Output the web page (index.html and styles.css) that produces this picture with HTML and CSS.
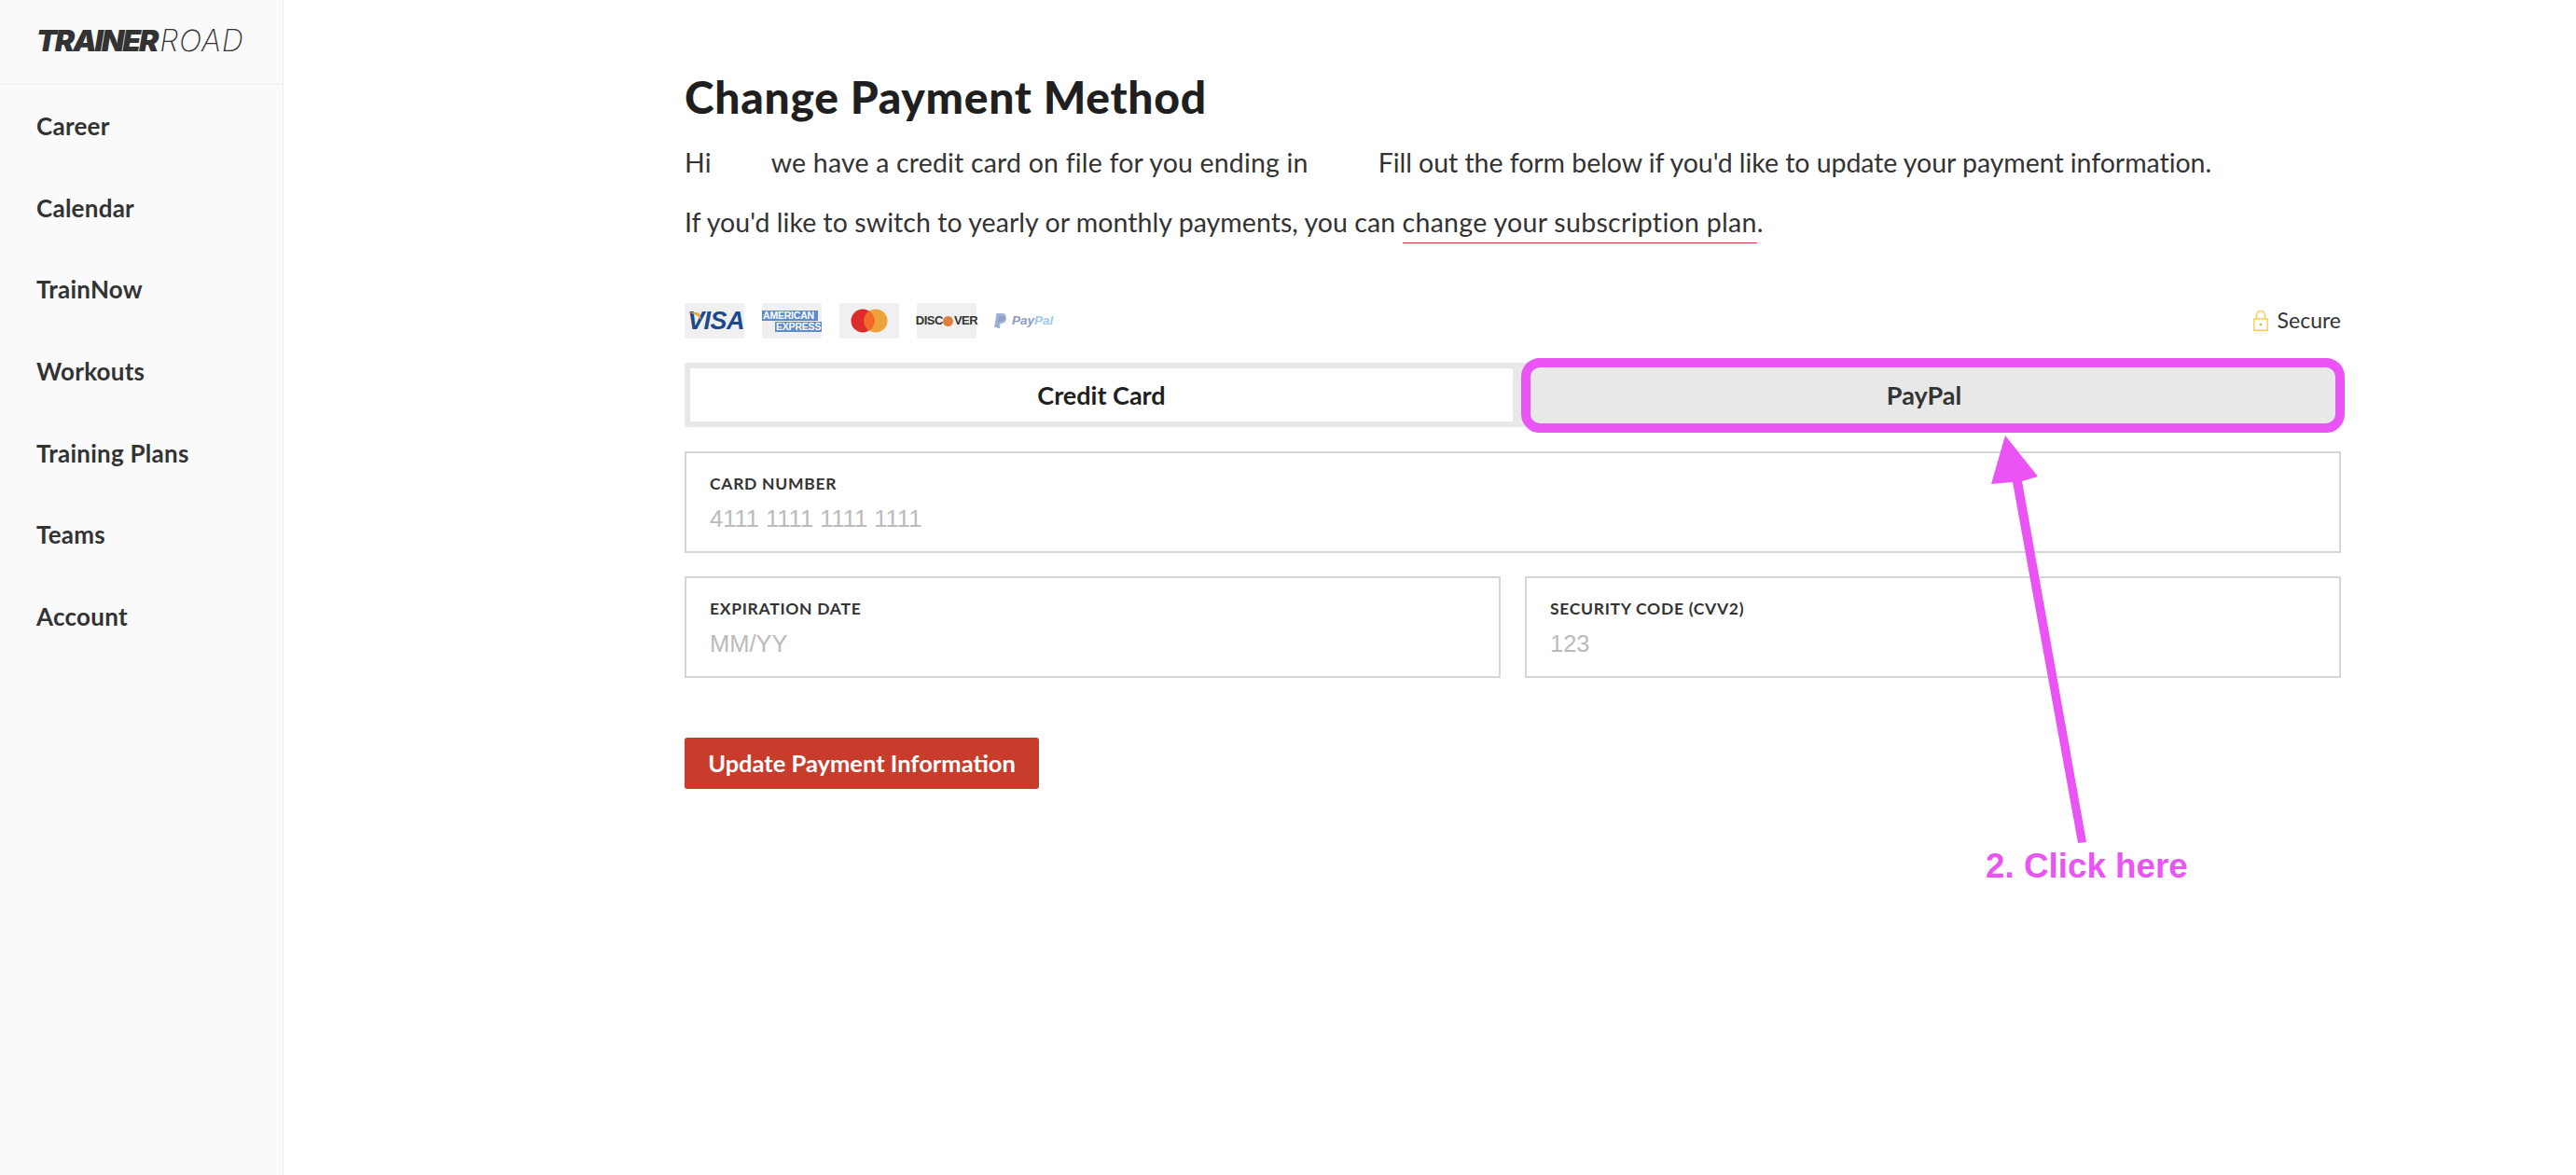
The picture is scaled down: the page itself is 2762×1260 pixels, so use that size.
FILE: index.html
```html
<!DOCTYPE html>
<html lang="en">
<head>
<meta charset="utf-8">
<title>Change Payment Method</title>
<link rel="stylesheet" href="styles.css">
</head>
<body>
<aside class="sidebar">
  <div class="brand"><span class="brand-a">TRAINER</span><span class="brand-b">ROAD</span></div>
  <nav class="nav">
    <a>Career</a><a>Calendar</a><a>TrainNow</a><a>Workouts</a><a>Training Plans</a><a>Teams</a><a>Account</a>
  </nav>
</aside>
<main class="main">
  <h1 class="title">Change Payment Method</h1>
  <p class="para first"><span>Hi</span><span class="gap-name"></span><span>we have a credit card on file for you ending in</span><span class="gap-digits"></span><span class="tight">Fill out the form below if you'd like to update your payment information.</span></p>
  <p class="para second">If you'd like to switch to yearly or monthly payments, you can <a class="link">change your subscription plan</a>.</p>

  <div class="pay-head">
    <div class="cards">
      <div class="card visa"><svg class="visa-tick" viewBox="0 0 14 8"><path d="M0 0h9q3 0 4 4l1 4Q10 2 0 0z" fill="#eda33b"/></svg><span>VISA</span></div>
      <div class="card amex"><span class="amex-1">AMERICAN</span><span class="amex-2">EXPRESS</span></div>
      <div class="card mc"><svg viewBox="0 0 40 26" width="40" height="26"><circle cx="13" cy="13" r="12.5" fill="#dd2c2c"/><circle cx="27" cy="13" r="12.5" fill="#eda33b"/><path d="M20 2.4a12.5 12.5 0 0 1 0 21.2a12.5 12.5 0 0 1 0-21.2z" fill="#f0692b"/></svg></div>
      <div class="card discover"><span>DISC</span><i class="disc-dot"></i><span>VER</span></div>
      <div class="paypal">
        <svg viewBox="0 0 14 16" width="14" height="16"><path d="M2.5 0h6q4.500 0 4 4t-5.500 5H5l-1 6H0z" fill="#9db4d8"/><path d="M5 3h5q3.500 0 3 3.500T8 11H6.500L6 16H3z" fill="#8b9bc7" opacity=".75"/></svg>
        <span class="pp-1">Pay</span><span class="pp-2">Pal</span>
      </div>
    </div>
    <div class="secure">
      <svg viewBox="0 0 16 22" width="16" height="22"><path d="M3.500 9V5a4.500 4.500 0 0 1 9 0v4" fill="none" stroke="#f7cf53" stroke-width="1.500"/><rect x=".8" y="9" width="14.400" height="12.200" fill="none" stroke="#f7cf53" stroke-width="1.500"/><circle cx="8" cy="15" r="1.300" fill="#d9b13c"/></svg>
      <span>Secure</span>
    </div>
  </div>

  <div class="tabs">
    <div class="tab active">Credit Card</div>
    <div class="tab">PayPal</div>
  </div>

  <div class="field wide">
    <div class="label">CARD NUMBER</div>
    <div class="placeholder">4111 1111 1111 1111</div>
  </div>
  <div class="field-row">
    <div class="field">
      <div class="label">EXPIRATION DATE</div>
      <div class="placeholder">MM/YY</div>
    </div>
    <div class="field">
      <div class="label">SECURITY CODE (CVV2)</div>
      <div class="placeholder">123</div>
    </div>
  </div>
  <button class="submit">Update Payment Information</button>
</main>

<svg class="annotation" viewBox="0 0 2762 1260" width="2762" height="1260">
  <rect x="1636" y="389" width="873" height="70" rx="15" fill="none" stroke="#ea54f5" stroke-width="10"/>
  <path d="M2150 467L2185 511L2168 516L2237 903L2228 904L2158 517L2135 519z" fill="#ea54f5"/>
</svg>
<div class="callout">2. Click here</div>
</body>
</html>
```
FILE: styles.css
```css
* { box-sizing: border-box; }
html, body { margin: 0; height: 100%; }
body {
  display: flex;
  min-height: 1260px;
  background: #fff;
  color: #333;
  font-family: Lato, "Liberation Sans", sans-serif;
  overflow: hidden;
}
.sidebar {
  width: 304px;
  flex: none;
  background: #fafafa;
  border-right: 1px solid #eee;
}
.brand {
  height: 91px;
  padding: 24px 0 0 39px;
  border-bottom: 1px solid #eee;
  font-family: Inter, Lato, sans-serif;
  font-size: 32px;
  line-height: 40px;
  font-style: italic;
  color: #333;
  white-space: nowrap;
}
.brand-a { font-weight: 900; letter-spacing: -2.100px; }
.brand-b { font-weight: 200; letter-spacing: .7px; margin-left: 3px; }
.nav { display: flex; flex-direction: column; padding-top: 1px; }
.nav a {
  height: 87.7px;
  padding: 28px 0 0 39px;
  font-size: 26px;
  line-height: 30px;
  font-weight: 700;
  letter-spacing: .25px;
  color: #333;
}
.main {
  flex: 1;
  padding: 72px 252px 0 430px;
}
.title {
  margin: 0;
  font-size: 48px;
  line-height: 64px;
  font-weight: 900;
  letter-spacing: .7px;
  color: #1f1f1f;
}
.para {
  margin: 0;
  font-size: 28.500px;
  line-height: 36px;
  letter-spacing: .18px;
  color: #333;
  white-space: nowrap;
}
.tight { letter-spacing: -.05px; }
.first { margin-top: 20px; }
.second { margin-top: 28px; letter-spacing: .05px; }
.gap-name { display: inline-block; width: 64px; }
.gap-digits { display: inline-block; width: 75px; }
.link {
  padding-bottom: 5px;
  letter-spacing: .3px;
  border-bottom: 1px solid #c93b2c;
}
.pay-head {
  display: flex;
  justify-content: space-between;
  align-items: center;
  height: 38px;
  margin-top: 69px;
}
.cards { display: flex; align-items: center; gap: 19px; }
.card {
  width: 64px;
  height: 38px;
  background: #f0f0f0;
  border-radius: 2px;
  display: flex;
  align-items: center;
  justify-content: center;
  position: relative;
}
.visa span {
  font: italic 700 27px/38px "Liberation Sans", sans-serif;
  color: #1a4a8b;
  letter-spacing: -.6px;
  margin-left: 3px;
}
.visa-tick { position: absolute; left: 4px; top: 10px; width: 14px; height: 8px; }
.amex {
  flex-direction: column;
  align-items: flex-start;
  justify-content: center;
  gap: 1px;
}
.amex span {
  display: block;
  font: 700 10.500px/11px "Liberation Sans", sans-serif;
  color: #fff;
  background: #5b8ccc;
  white-space: nowrap;
  letter-spacing: -.2px;
}
.amex-1 { padding: 0 1px; width: 60px; }
.amex-2 { margin-left: 14px; padding: 0 1px; width: 50px; }
.discover { gap: 0; font: 700 13px/38px "Liberation Sans", sans-serif; color: #333; letter-spacing: -.5px; }
.disc-dot { width: 11px; height: 11px; border-radius: 50%; background: #df7f3e; margin: 0 .5px; flex: none; }
.paypal { display: flex; align-items: center; gap: 5px; width: 64px; font: italic 700 13.500px/16px "Liberation Sans", sans-serif; }
.paypal span + span { margin-left: -5px; }
.pp-1 { color: #8d99c4; }
.pp-2 { color: #9cc9ea; }
.secure { display: flex; align-items: center; gap: 10px; font-size: 23px; color: #333; }
.secure span { position: relative; top: -1px; }
.tabs {
  display: grid;
  grid-template-columns: 882px 1fr;
  height: 69px;
  margin-top: 26px;
  border: 6px solid #e8e8e8;
  border-radius: 3px;
  background: #e8e8e8;
}
.tab {
  display: flex;
  align-items: center;
  justify-content: center;
  font-size: 27px;
  font-weight: 700;
  color: #333;
}
.tab.active { background: #fff; color: #1f1f1f; border-radius: 1px; }
.field {
  height: 109px;
  padding: 23px 25px 0;
  border: 2px solid #d6d6d6;
  background: #fff;
}
.wide { margin-top: 26px; }
.field-row {
  display: grid;
  grid-template-columns: 875px 875px;
  gap: 26px;
  margin-top: 25px;
}
.label {
  font-size: 17.500px;
  line-height: 20px;
  font-weight: 700;
  color: #333;
  letter-spacing: .7px;
}
.placeholder {
  margin-top: 12px;
  font: 25.500px/30px "Liberation Sans", sans-serif;
  color: #bbb;
}
.submit {
  display: block;
  width: 380px;
  height: 55px;
  margin-top: 64px;
  padding-bottom: 3px;
  border: 0;
  border-radius: 3px;
  background: #c83c2c;
  color: #fff;
  font-family: inherit;
  font-size: 25.500px;
  font-weight: 700;
}
.annotation { position: absolute; left: 0; top: 0; pointer-events: none; }
.callout {
  position: absolute;
  left: 2129px;
  top: 908px;
  font: 700 36.800px/42px "Liberation Sans", sans-serif;
  color: #ea54f5;
}
```
